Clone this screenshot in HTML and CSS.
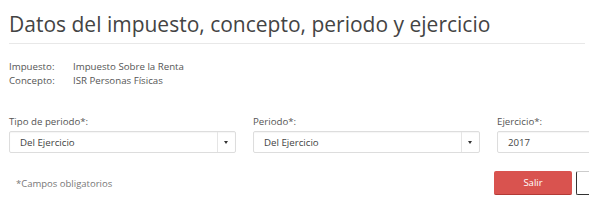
FILE: index.html
```html
<!DOCTYPE html>
<html lang="es">
<head>
  <meta charset="UTF-8" />
  <title>Datos del impuesto</title>
  <link rel="stylesheet" href="styles.css">
</head>
<body>

  <div class="page">
    <h1 class="page-title">Datos del impuesto, concepto, periodo y ejercicio</h1>

    <div class="datos">
      <div class="dato"><span class="dato-label">Impuesto:</span><span>Impuesto Sobre la Renta</span></div>
      <div class="dato"><span class="dato-label">Concepto:</span><span>ISR Personas Físicas</span></div>
    </div>

    <div class="campos">
      <div class="campo">
        <label>Tipo de periodo*:</label>
        <div class="select">
          <span class="select-text">Del Ejercicio</span>
          <span class="select-arrow"></span>
        </div>
      </div>
      <div class="campo">
        <label>Periodo*:</label>
        <div class="select">
          <span class="select-text">Del Ejercicio</span>
          <span class="select-arrow"></span>
        </div>
      </div>
      <div class="campo">
        <label>Ejercicio*:</label>
        <div class="input">2017</div>
      </div>
    </div>

    <div class="pie">
      <span class="nota">*Campos obligatorios</span>
      <div class="botones">
        <button class="btn btn-salir">Salir</button>
        <button class="btn btn-otro"></button>
      </div>
    </div>
  </div>

</body>
</html>
```

FILE: styles.css
```css
body {
  margin: 0;
  background-color: #fff;
  font-family: 'Open Sans', sans-serif;
  color: #555;
  overflow: hidden;
}

.page {
  padding-left: 9px;
  width: 700px;
}

.page-title {
  margin: 0;
  padding-top: 10px;
  padding-bottom: 5px;
  width: 576px;
  font-size: 21px;
  font-weight: normal;
  line-height: 28px;
  color: #444;
  white-space: nowrap;
  border-bottom: 1px solid #e8e8e8;
}

/* datos del impuesto */
.datos {
  margin-top: 16px;
  font-size: 9.7px;
  line-height: 14px;
  color: #555;
}

.dato-label {
  display: inline-block;
  width: 64px;
}

/* campos */
.campos {
  display: grid;
  grid-template-columns: 227px 227px 227px;
  gap: 17px;
  margin-top: 27px;
}

.campo label {
  display: block;
  font-size: 9.7px;
  line-height: 14px;
  margin-bottom: 2px;
  color: #555;
}

.select,
.input {
  display: flex;
  align-items: center;
  box-sizing: border-box;
  height: 22px;
  border: 1px solid #ddd;
  border-radius: 2px;
  font-size: 9.7px;
  color: #444;
  box-shadow: inset 0 1px 1px rgba(0,0,0,0.04);
}

.select-text {
  flex-grow: 1;
  padding-left: 10px;
}

.input {
  padding-left: 10px;
}

.select-arrow {
  width: 17px;
  height: 100%;
  border-left: 1px solid #e5e5e5;
  position: relative;
}

.select-arrow::after {
  content: '';
  position: absolute;
  left: 6px;
  top: 9px;
  border-left: 2px solid transparent;
  border-right: 2px solid transparent;
  border-top: 3px solid #333;
}

/* pie */
.pie {
  display: flex;
  align-items: center;
  justify-content: space-between;
  width: 645px;
  margin-top: 18px;
}

.nota {
  padding-left: 7px;
  font-size: 9.5px;
  color: #777;
}

.botones {
  display: flex;
  gap: 4px;
}

.btn {
  height: 24px;
  border-radius: 2px;
  font-family: 'Open Sans', sans-serif;
  font-size: 9.5px;
  cursor: pointer;
}

.btn-salir {
  width: 78px;
  background-color: #d9534f;
  border: none;
  border-bottom: 1px solid #b33a36;
  color: white;
}

.btn-otro {
  width: 78px;
  background-color: white;
  border: 1px solid #ccc;
  border-left-color: #333;
  border-bottom-color: #333;
}
```
